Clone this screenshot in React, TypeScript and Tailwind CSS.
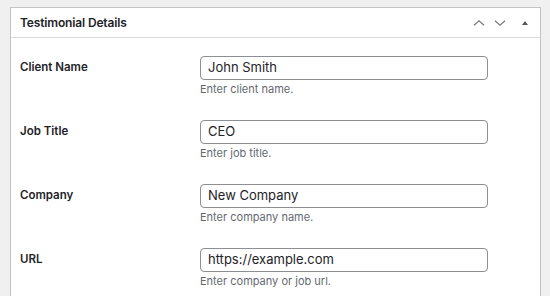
import React from 'react';

const fields = [
  { label: 'Client Name', value: 'John Smith', help: 'Enter client name.' },
  { label: 'Job Title', value: 'CEO', help: 'Enter job title.' },
  { label: 'Company', value: 'New Company', help: 'Enter company name.' },
  { label: 'URL', value: 'https://example.com', help: 'Enter company or job url.' },
];

const App: React.FC = () => {
  return (
    <div className="w-[550px] h-[296px] overflow-hidden bg-[#f0f0f1] pl-[10px] pr-[9px] pt-[7px] font-['Inter','Liberation_Sans',sans-serif] text-[#1d2327]">
      <div className="bg-white border border-[#c3c4c7] h-[300px]">
        {/* Header */}
        <div className="h-[30px] border-b border-[#dcdcde] flex items-center pl-[9px] pr-[5px]">
          <h2 className="text-[12px] font-semibold tracking-[-0.15px] flex-1">Testimonial Details</h2>
          <div className="flex items-center text-[#787c82]">
            <button className="w-[20px] h-[20px] flex items-center justify-center">
              <svg width="12" height="8" viewBox="0 0 12 8" fill="none" stroke="currentColor" strokeWidth="1.3">
                <path d="M1 6.3 L6 1.8 L11 6.3" />
              </svg>
            </button>
            <button className="w-[20px] h-[20px] flex items-center justify-center ml-[1px]">
              <svg width="12" height="8" viewBox="0 0 12 8" fill="none" stroke="currentColor" strokeWidth="1.3">
                <path d="M1 1.7 L6 6.2 L11 1.7" />
              </svg>
            </button>
            <button className="w-[20px] h-[20px] flex items-center justify-center ml-[5px] text-[#50575e]">
              <svg width="8" height="6" viewBox="0 0 8 6" fill="currentColor">
                <path d="M4 1 L7 5 L1 5 Z" />
              </svg>
            </button>
          </div>
        </div>

        {/* Fields */}
        <div className="pt-[18px] pl-[9px]">
          {fields.map((f) => (
            <div key={f.label} className="flex h-[64px]">
              <div className="w-[180px] h-[24px] flex items-center text-[11.5px] font-semibold">{f.label}</div>
              <div>
                <div className="w-[288px] h-[24px] border border-[#8c8f94] rounded-[4px] flex items-center px-[7px] text-[13px]">
                  {f.value}
                </div>
                <p className="mt-[2px] text-[11px] leading-[14px] text-[#646970]">{f.help}</p>
              </div>
            </div>
          ))}
        </div>
      </div>
    </div>
  );
};

export default App;
